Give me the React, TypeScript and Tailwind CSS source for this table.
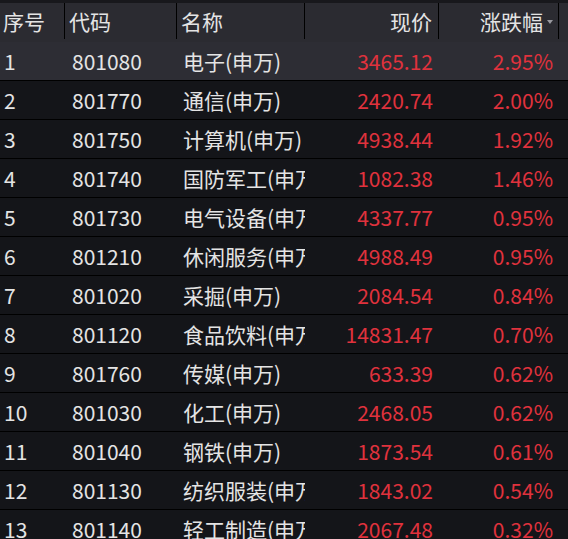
const rows = [
  { no: 1, code: '801080', name: '电子(申万)', price: '3465.12', pct: '2.95%' },
  { no: 2, code: '801770', name: '通信(申万)', price: '2420.74', pct: '2.00%' },
  { no: 3, code: '801750', name: '计算机(申万)', price: '4938.44', pct: '1.92%' },
  { no: 4, code: '801740', name: '国防军工(申万)', price: '1082.38', pct: '1.46%' },
  { no: 5, code: '801730', name: '电气设备(申万)', price: '4337.77', pct: '0.95%' },
  { no: 6, code: '801210', name: '休闲服务(申万)', price: '4988.49', pct: '0.95%' },
  { no: 7, code: '801020', name: '采掘(申万)', price: '2084.54', pct: '0.84%' },
  { no: 8, code: '801120', name: '食品饮料(申万)', price: '14831.47', pct: '0.70%' },
  { no: 9, code: '801760', name: '传媒(申万)', price: '633.39', pct: '0.62%' },
  { no: 10, code: '801030', name: '化工(申万)', price: '2468.05', pct: '0.62%' },
  { no: 11, code: '801040', name: '钢铁(申万)', price: '1873.54', pct: '0.61%' },
  { no: 12, code: '801130', name: '纺织服装(申万)', price: '1843.02', pct: '0.54%' },
  { no: 13, code: '801140', name: '轻工制造(申万)', price: '2067.48', pct: '0.32%' },
];

const cols = 'grid grid-cols-[65px_112px_128px_134px_120px_1fr]';

const App = () => {
  return (
    <div
      className="w-[568px] h-[539px] overflow-hidden bg-[#141519] text-[21px] text-[#e4e4e4]"
      style={{ fontFamily: '"Noto Sans CJK SC", "Noto Sans", sans-serif' }}
    >
      {/* Header */}
      <div className={`${cols} h-[42px] border-t-[3px] border-[#18181c] pb-[3px] bg-[#2b2b31] leading-none`}>
        <div className="flex items-center pl-[3px] pt-[1px] border-r border-black">序号</div>
        <div className="flex items-center pl-[4px] pt-[1px] border-r border-black">代码</div>
        <div className="flex items-center pl-[4px] pt-[1px] border-r border-black">名称</div>
        <div className="flex items-center justify-end pr-[6px] pt-[1px] border-r border-black">现价</div>
        <div className="flex items-center justify-end pr-[5px] pt-[1px] border-r border-black">
          涨跌幅
          <span className="ml-[4px] mt-[1px] w-0 h-0 border-l-[3px] border-r-[3px] border-t-[4px] border-l-transparent border-r-transparent border-t-[#9a9aa0]" />
        </div>
        <div />
      </div>

      {/* Rows */}
      {rows.map((r) => (
        <div
          key={r.no}
          className={`${cols} h-[39px] border-b border-black leading-none ${r.no === 1 ? 'bg-[#2d2d34]' : ''}`}
        >
          <div className="flex items-center pl-[4px]">{r.no}</div>
          <div className="flex items-center pl-[7px]">{r.code}</div>
          <div className="flex items-center pl-[6px] overflow-hidden whitespace-nowrap">{r.name}</div>
          <div className="flex items-center justify-end pr-[6px] text-[#e0323d]">{r.price}</div>
          <div className="flex items-center justify-end pr-[6px] text-[#e0323d]">{r.pct}</div>
          <div />
        </div>
      ))}
    </div>
  );
};

export default App;
